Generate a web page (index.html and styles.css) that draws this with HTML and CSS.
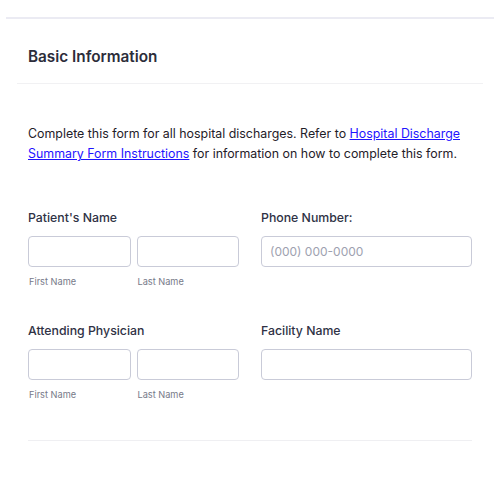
FILE: index.html
```html
<!DOCTYPE html>
<html lang="en">
<head>
  <meta charset="UTF-8" />
  <meta name="viewport" content="width=device-width, initial-scale=1.0"/>
  <title>Hospital Discharge Summary</title>
  <link rel="stylesheet" href="styles.css">
</head>
<body>
  <div class="card">
    <div class="header">
      <h2>Basic Information</h2>
    </div>

    <div class="content">
      <p class="intro">
        Complete this form for all hospital discharges. Refer to
        <a href="#">Hospital Discharge Summary Form Instructions</a>
        for information on how to complete this form.
      </p>

      <div class="row">
        <div class="field">
          <label>Patient's Name</label>
          <div class="split">
            <div class="sub">
              <input type="text">
              <span>First Name</span>
            </div>
            <div class="sub">
              <input type="text">
              <span>Last Name</span>
            </div>
          </div>
        </div>
        <div class="field">
          <label>Phone Number:</label>
          <input type="text" placeholder="(000) 000-0000">
        </div>
      </div>

      <div class="row">
        <div class="field">
          <label>Attending Physician</label>
          <div class="split">
            <div class="sub">
              <input type="text">
              <span>First Name</span>
            </div>
            <div class="sub">
              <input type="text">
              <span>Last Name</span>
            </div>
          </div>
        </div>
        <div class="field">
          <label>Facility Name</label>
          <input type="text">
        </div>
      </div>

      <hr class="divider">
    </div>
  </div>
</body>
</html>
```

FILE: styles.css
```css
* {
  margin: 0;
  padding: 0;
  box-sizing: border-box;
  font-family: Inter, 'Liberation Sans', sans-serif;
}

body {
  background: #fff;
  color: #2c2d3a;
}

.card {
  margin: 17px 6px 0;
  border-top: 2px solid #ebebf3;
}

.header {
  margin: 0 11px;
  padding: 28px 11px 16px;
  border-bottom: 1px solid #f1f1f3;
}

.header h2 {
  font-size: 15.3px;
  font-weight: 600;
  line-height: 20px;
  color: #2c2d3a;
}

.content {
  padding: 0 22px;
}

.intro {
  margin-top: 40px;
  font-size: 12.4px;
  line-height: 20px;
  color: #1f2028;
}

.intro a {
  color: #1f14ff;
}

.row {
  display: grid;
  grid-template-columns: 1fr 1fr;
  gap: 22px;
  margin-top: 44px;
}

.row + .row {
  margin-top: 32px;
}

.field label {
  display: block;
  font-size: 12.3px;
  font-weight: 500;
  line-height: 20px;
  color: #2f3245;
  margin-bottom: 8px;
}

.split {
  display: flex;
  gap: 6px;
}

.sub {
  flex: 1;
}

.sub span {
  display: block;
  margin-top: 8px;
  padding-left: 1px;
  font-size: 9.2px;
  line-height: 14px;
  color: #767988;
}

input {
  display: block;
  width: 100%;
  height: 31px;
  padding: 0 8px;
  border: 1px solid #c9cbd8;
  border-radius: 4px;
  font-size: 12px;
  color: #2c2d3a;
  background: #fff;
}

input::placeholder {
  color: #9ea1b0;
}

.divider {
  margin-top: 38px;
  border: 0;
  border-top: 1px solid #efeff2;
}
```
